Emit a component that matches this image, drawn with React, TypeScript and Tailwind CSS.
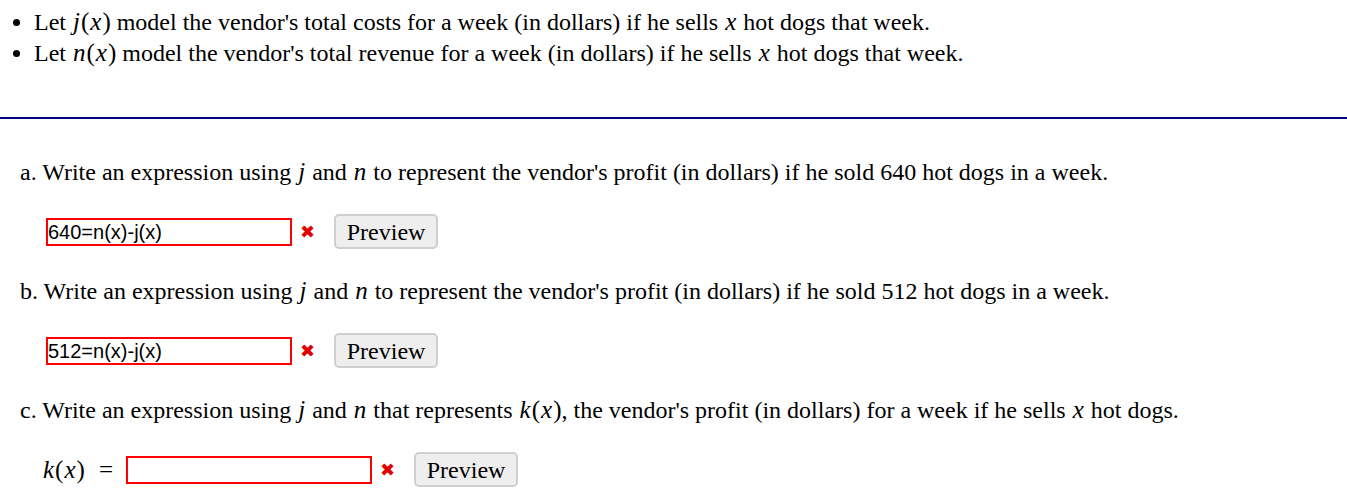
import React from "react";

const serif = "font-['Liberation_Serif','Times_New_Roman',serif]";

const M = ({ children }: { children: React.ReactNode }) => (
  <span className="px-[1px] font-['Liberation_Serif','Times_New_Roman',serif] text-[25px] leading-none italic">
    {children}
  </span>
);

const Fx = ({ f }: { f: string }) => (
  <span className="whitespace-nowrap">
    <M>{f}</M>
    <span className="text-[25px] leading-none">(</span>
    <M>x</M>
    <span className="text-[25px] leading-none">)</span>
  </span>
);

type AnswerRowProps = { value: string; lead?: React.ReactNode };

const AnswerRow = ({ value, lead }: AnswerRowProps) => (
  <div className="flex h-[35px] items-center">
    {lead}
    <div className="flex h-[28px] w-[246px] items-center border-2 border-[#ff0000] bg-white">
      <span className="font-['Liberation_Sans',Arial,sans-serif] text-[20px] leading-none text-black">
        {value}
      </span>
    </div>
    <span className="ml-[8px] font-['DejaVu_Sans',sans-serif] text-[18px] leading-none text-[#e00000]">
      ✖
    </span>
    <button className="ml-[19px] h-[35px] w-[104px] rounded-[5px] border-2 border-[#cfcfcf] bg-[#eeeeee] text-[24px] leading-none text-black">
      Preview
    </button>
  </div>
);

export default function App() {
  return (
    <div className={`${serif} min-h-[495px] bg-white text-[24px] text-black`}>
      <ul className="list-disc pl-[34px] pt-[7px] leading-[31px]">
        <li>
          Let <Fx f="j" /> model the vendor's total costs for a week (in dollars) if he sells{" "}
          <M>x</M> hot dogs that week.
        </li>
        <li>
          Let <Fx f="n" /> model the vendor's total revenue for a week (in dollars) if he sells{" "}
          <M>x</M> hot dogs that week.
        </li>
      </ul>

      <hr className="mt-[48px] border-0 border-t-2 border-[#00007f]" />

      <div className="pl-[20px] pt-[38px]">
        <p className="leading-[30px]">
          a. Write an expression using <M>j</M> and <M>n</M> to represent the vendor's profit (in
          dollars) if he sold 640 hot dogs in a week.
        </p>
        <div className="mt-[27px] pl-[26px]">
          <AnswerRow value="640=n(x)-j(x)" />
        </div>

        <p className="mt-[27px] leading-[30px]">
          b. Write an expression using <M>j</M> and <M>n</M> to represent the vendor's profit (in
          dollars) if he sold 512 hot dogs in a week.
        </p>
        <div className="mt-[27px] pl-[26px]">
          <AnswerRow value="512=n(x)-j(x)" />
        </div>

        <p className="mt-[27px] leading-[30px]">
          c. Write an expression using <M>j</M> and <M>n</M> that represents <Fx f="k" />, the
          vendor's profit (in dollars) for a week if he sells <M>x</M> hot dogs.
        </p>
        <div className="mt-[27px] pl-[22px]">
          <AnswerRow
            value=""
            lead={
              <span className="mr-[13px] inline-flex w-[71px] items-center justify-between">
                <Fx f="k" />
                <span className="text-[25px] leading-none">=</span>
              </span>
            }
          />
        </div>
      </div>
    </div>
  );
}
